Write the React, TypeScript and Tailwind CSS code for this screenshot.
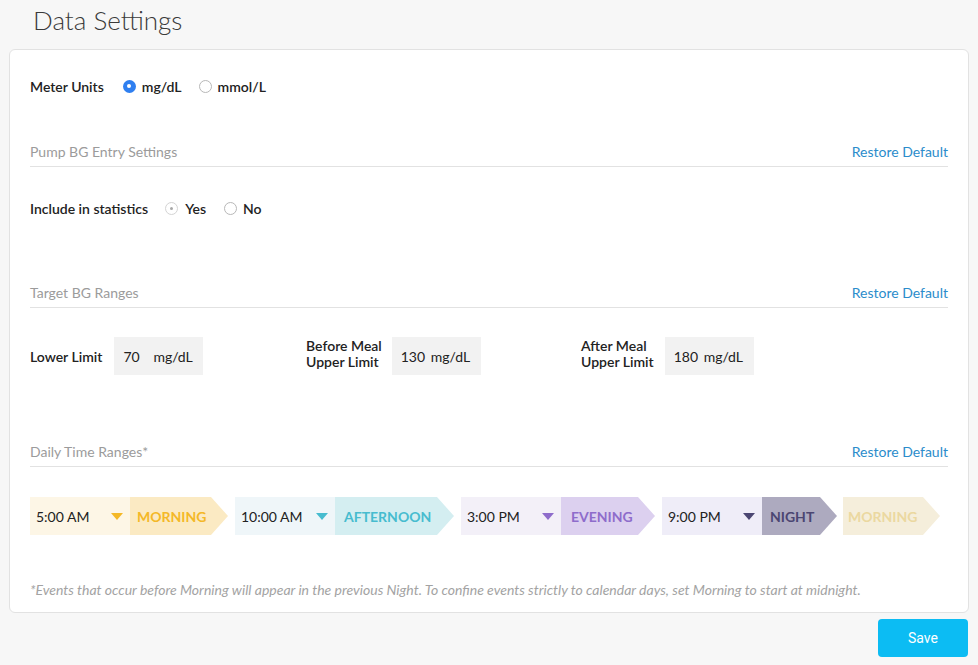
import React from "react";

type Range = {
  time: string;
  label: string;
  size: string;
  selectBg: string;
  tagBg: string;
  tagText: string;
  caret: string;
};

const ranges: Range[] = [
  { time: "5:00 AM", label: "MORNING", size: "w-[98px] pl-[7px]", selectBg: "bg-[#fdf6e6]", tagBg: "bg-[#fbeac3]", tagText: "text-[#f4b827]", caret: "border-t-[#f4b827]" },
  { time: "10:00 AM", label: "AFTERNOON", size: "w-[119px] pl-[9px]", selectBg: "bg-[#eff6f9]", tagBg: "bg-[#d4eef1]", tagText: "text-[#47bccf]", caret: "border-t-[#47bccf]" },
  { time: "3:00 PM", label: "EVENING", size: "w-[94px] pl-[10px]", selectBg: "bg-[#f3f0f8]", tagBg: "bg-[#dcd0ef]", tagText: "text-[#8e6ccb]", caret: "border-t-[#8e6ccb]" },
  { time: "9:00 PM", label: "NIGHT", size: "w-[75px] pl-[8px]", selectBg: "bg-[#efedf8]", tagBg: "bg-[#adaabf]", tagText: "text-[#4b4672]", caret: "border-t-[#4b4672]" },
];

const chevron =
  "[clip-path:polygon(0_0,calc(100%-17px)_0,100%_50%,calc(100%-17px)_100%,0_100%)]";

function Radio({ state }: { state: "on" | "off" | "muted" }) {
  if (state === "on") {
    return (
      <span className="flex h-[13px] w-[13px] items-center justify-center rounded-full bg-[#2f7ff0]">
        <span className="h-[4px] w-[4px] rounded-full bg-white" />
      </span>
    );
  }
  if (state === "muted") {
    return (
      <span className="flex h-[13px] w-[13px] items-center justify-center rounded-full border border-[#d4d4d4] bg-white">
        <span className="h-[3px] w-[3px] rounded-full bg-[#a8a8a8]" />
      </span>
    );
  }
  return <span className="h-[13px] w-[13px] rounded-full border border-[#b8b8b8] bg-white" />;
}

function SectionHeader({ title, className }: { title: string; className?: string }) {
  return (
    <div className={`flex items-end justify-between border-b border-[#e2e2e2] pb-[4px] ${className ?? ""}`}>
      <span className="text-[14px] leading-[20px] text-[#9b9b9b]">{title}</span>
      <span className="text-[14px] leading-[20px] text-[#2b8ccb]">Restore Default</span>
    </div>
  );
}

function LimitBox({ value }: { value: string }) {
  return (
    <div className="flex h-[38px] w-[89px] items-center bg-[#f2f2f2] pl-[9px] text-[14px] text-[#222]">
      <span className="w-[30px]">{value}</span>
      <span>mg/dL</span>
    </div>
  );
}

export default function App() {
  return (
    <div className="min-h-[665px] bg-[#f7f7f7] pt-[4px] font-['Lato','Open_Sans',sans-serif] text-[#222]">
      <h1 className="pl-[33px] font-['Lato_Light','Lato',sans-serif] text-[26px] font-light leading-[32px] text-[#3a3a3a]">
        Data Settings
      </h1>

      <div className="mx-[9px] mt-[13px] rounded-[6px] border border-[#e2e2e2] bg-white px-5 pb-[12px] pt-[26px]">
        <div className="flex h-[20px] items-center text-[14px] font-semibold">
          <span>Meter Units</span>
          <span className="ml-[19px] flex items-center gap-[6px]">
            <Radio state="on" />
            mg/dL
          </span>
          <span className="ml-[17px] flex items-center gap-[6px]">
            <Radio state="off" />
            mmol/L
          </span>
        </div>

        <SectionHeader title="Pump BG Entry Settings" className="mt-[46px]" />

        <div className="mt-[31px] flex h-[20px] items-center text-[14px] font-semibold">
          <span>Include in statistics</span>
          <span className="ml-[17px] flex items-center gap-[7px]">
            <Radio state="muted" />
            Yes
          </span>
          <span className="ml-[18px] flex items-center gap-[6px]">
            <Radio state="off" />
            No
          </span>
        </div>

        <SectionHeader title="Target BG Ranges" className="mt-[65px]" />

        <div className="mt-[29px] flex items-center text-[14px]">
          <div className="flex w-[276px] items-center gap-3">
            <span className="font-semibold">Lower Limit</span>
            <LimitBox value="70" />
          </div>
          <div className="flex w-[275px] items-center gap-[10px]">
            <span className="mb-[4px] font-semibold leading-[16px]">
              Before Meal
              <br />
              Upper Limit
            </span>
            <LimitBox value="130" />
          </div>
          <div className="flex items-center gap-[11px]">
            <span className="mb-[4px] font-semibold leading-[16px]">
              After Meal
              <br />
              Upper Limit
            </span>
            <LimitBox value="180" />
          </div>
        </div>

        <SectionHeader title="Daily Time Ranges*" className="mt-[67px]" />

        <div className="mt-[30px] flex h-[38px] items-stretch gap-[7px] text-[14px]">
          {ranges.map((r) => (
            <div key={r.time} className="flex">
              <div className={`flex w-[100px] items-center justify-between pl-[6px] pr-[7px] ${r.selectBg}`}>
                <span className="text-[#222]">{r.time}</span>
                <span className={`h-0 w-0 border-x-[6px] border-t-[7px] border-x-transparent ${r.caret}`} />
              </div>
              <div className={`flex items-center font-bold ${r.size} ${r.tagBg} ${r.tagText} ${chevron}`}>
                {r.label}
              </div>
            </div>
          ))}
          <div className={`-ml-px flex w-[97px] items-center bg-[#f5eedb] pl-[5px] font-bold text-[#ebd8a0] ${chevron}`}>
            MORNING
          </div>
        </div>

        <p className="mt-[45px] text-[14px] italic leading-[20px] text-[#a3a3a3]">
          *Events that occur before Morning will appear in the previous Night. To confine events strictly to calendar days, set Morning to start at midnight.
        </p>
      </div>

      <div className="mr-[10px] mt-[6px] flex justify-end">
        <button className="h-[38px] w-[90px] rounded-[4px] bg-[#0cbcf3] font-['Roboto',sans-serif] text-[14px] text-white">
          Save
        </button>
      </div>
    </div>
  );
}
